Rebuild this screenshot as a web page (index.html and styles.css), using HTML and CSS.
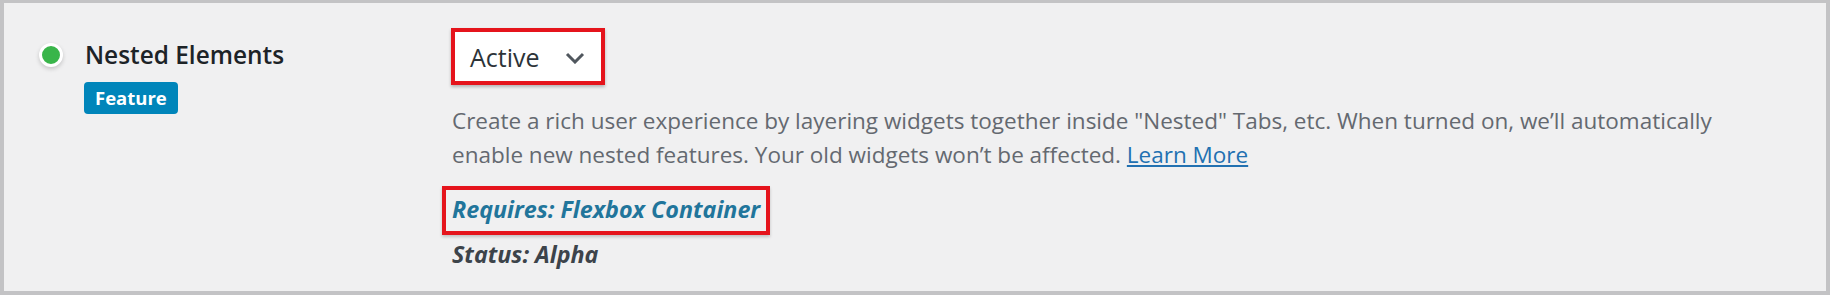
FILE: index.html
```html
<!DOCTYPE html>
<html lang="en">
<head>
    <meta charset="UTF-8">
    <meta name="viewport" content="width=device-width, initial-scale=1.0">
    <title>Experiments - Nested Elements</title>
    <link rel="stylesheet" href="styles.css">
</head>
<body>
    <div class="panel">
        <div class="row">
            <div class="label-col">
                <div class="title-line">
                    <span class="dot"></span>
                    <h3 class="title">Nested Elements</h3>
                </div>
                <span class="tag">Feature</span>
            </div>
            <div class="field-col">
                <div class="select">
                    <span>Active</span>
                    <svg class="chevron" width="20" height="12" viewBox="0 0 20 12"><path d="M2 2l8 8 8-8" fill="none" stroke="#50575e" stroke-width="3"/></svg>
                </div>
                <p class="desc">Create a rich user experience by layering widgets together inside "Nested" Tabs, etc. When turned on, we’ll automatically enable new nested features. Your old widgets won’t be affected. <a href="#">Learn More</a></p>
                <div class="requires"><a href="#">Requires: Flexbox Container</a></div>
                <p class="status">Status: Alpha</p>
            </div>
        </div>
    </div>
</body>
</html>
```

FILE: styles.css
```css
body { margin: 0; font-family: "Open Sans", "Noto Sans", sans-serif; }
.panel { box-sizing: border-box; width: 1830px; height: 295px; background: #f0f0f1; border: 4px solid #c3c3c5; border-top-width: 3px; }
.row { display: flex; padding-top: 25px; }
.label-col { width: 448px; padding-left: 35px; box-sizing: border-box; flex: none; }
.title-line { display: flex; align-items: center; height: 24px; margin-top: 15px; }
.dot { width: 18px; height: 18px; border-radius: 50%; background: #39b54a; border: 3px solid #fff; box-shadow: 0 2px 4px rgba(0,0,0,0.18); flex: none; }
.title { margin: 0 0 0 22px; font-size: 24.4px; font-weight: 600; color: #1d2327; line-height: 24px; }
.tag { display: inline-block; margin: 15px 0 0 45px; height: 32px; line-height: 32px; padding: 0 11px; background: #0085ba; color: #fff; font-weight: 700; font-size: 18.5px; border-radius: 4px; }
.field-col { flex: 1; }
.select { display: inline-flex; align-items: center; justify-content: space-between; box-sizing: border-box; width: 154px; height: 57px; margin-left: -1px; padding: 0 16px 0 15px; background: #fff; border: 4px solid #e5141c; box-shadow: 0 2px 3px rgba(0,0,0,0.25); font-size: 25px; color: #2c3338; }
.chevron { margin-top: 2px; }
.desc { margin: 19px 0 0; max-width: 1275px; font-size: 22.5px; line-height: 34px; color: #646970; }
.desc a { color: #2271b1; }
.requires { display: inline-block; margin: 14px 0 0 -10px; padding: 1px 6px 1px 6px; border: 4px solid #e5141c; box-shadow: 0 2px 3px rgba(0,0,0,0.2); line-height: 36px; }
.requires a { font-size: 23.3px; font-weight: 700; font-style: italic; color: #21759b; text-decoration: none; }
.status { margin: 2px 0 0; font-size: 23.3px; font-weight: 700; font-style: italic; line-height: 34px; color: #3c434a; }
```
